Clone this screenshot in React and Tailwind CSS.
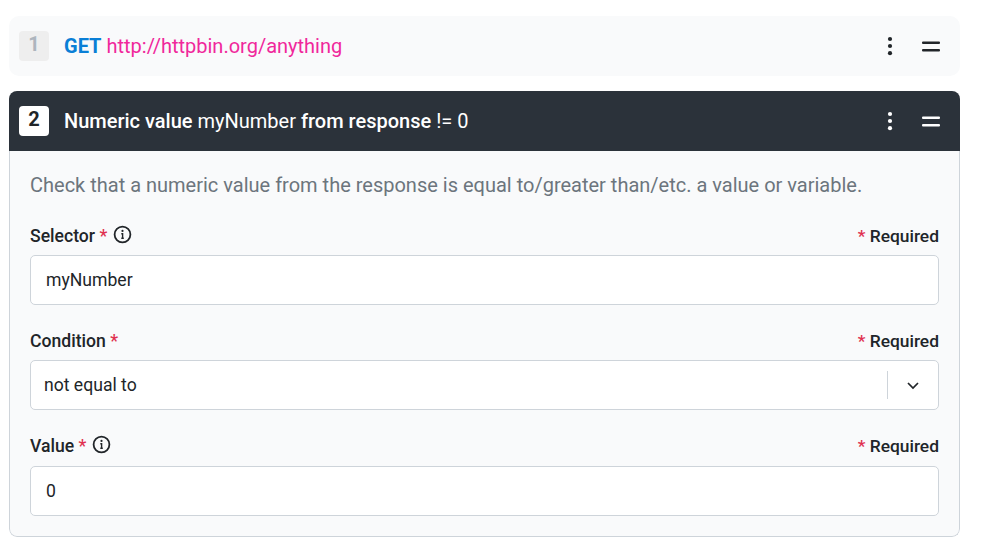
const font = { fontFamily: "Roboto, sans-serif" };

function Kebab({ color }) {
  return (
    <svg width="6" height="20" viewBox="0 0 6 20" className={color}>
      <circle cx="3" cy="3" r="2.1" fill="currentColor" />
      <circle cx="3" cy="10" r="2.1" fill="currentColor" />
      <circle cx="3" cy="17.2" r="2.1" fill="currentColor" />
    </svg>
  );
}

function Grip({ color }) {
  return (
    <svg width="18" height="11" viewBox="0 0 18 11" className={color}>
      <rect x="0" y="0.5" width="18" height="2.4" rx="1" fill="currentColor" />
      <rect x="0" y="8" width="18" height="2.4" rx="1" fill="currentColor" />
    </svg>
  );
}

function Info() {
  return (
    <svg width="19" height="19" viewBox="0 0 19 19" fill="none" className="text-[#212529] -mt-[4px]">
      <circle cx="9.5" cy="9.5" r="7.9" stroke="currentColor" strokeWidth="1.8" />
      <circle cx="9.5" cy="5.9" r="1.1" fill="currentColor" />
      <path d="M8.3 8.8h1.3v4.4M8.3 13.3h2.5" stroke="currentColor" strokeWidth="1.4" />
    </svg>
  );
}

function Label({ name, info }) {
  return (
    <div className="flex items-center justify-between h-[24px]">
      <div className="flex items-center gap-[6px] text-[17.6px] font-medium text-[#212529] leading-[24px]">
        <span>
          {name} <span className="text-[#e03150]">*</span>
        </span>
        {info && <Info />}
      </div>
      <div className="text-[17.4px] font-medium text-[#212529] leading-[24px]">
        <span className="text-[#e03150]">*</span> Required
      </div>
    </div>
  );
}

function TextBox({ value, gap }) {
  return (
    <div className={`${gap} h-[50px] rounded-[5px] border border-[#ced4da] bg-white pl-[15px] flex items-center text-[17.6px] text-[#212529]`}>
      <span className="mt-[1px]">{value}</span>
    </div>
  );
}

export default function App() {
  return (
    <div style={font} className="min-h-[547px] w-[981px] bg-white pl-[9px] pt-[16px]">
      <div className="w-[951px] h-[60px] rounded-[10px] bg-[#f9fafb] flex items-center pl-[10px] pr-[20px]">
        <div className="w-[30px] h-[30px] rounded-[4px] bg-[#eeeeee] flex items-center justify-center text-[20px] font-bold text-[#adb5bd] pb-[4px]">
          1
        </div>
        <div className="ml-[15px] text-[20px] flex-1">
          <span className="font-bold text-[#0a7fd6]">GET</span>{" "}
          <span className="text-[#f0289b]">http://httpbin.org/anything</span>
        </div>
        <Kebab color="text-[#212529]" />
        <div className="w-[29px]" />
        <Grip color="text-[#212529]" />
      </div>

      <div className="mt-[15px] w-[951px] h-[446px] rounded-[8px] overflow-hidden">
        <div className="h-[60px] bg-[#2b323a] flex items-center pl-[10px] pr-[20px]">
          <div className="w-[30px] h-[30px] rounded-[4px] bg-white flex items-center justify-center text-[20px] font-bold text-[#212529] pb-[4px]">
            2
          </div>
          <div className="ml-[15px] text-[20px] text-white flex-1 font-medium">
            Numeric value <span className="font-normal">myNumber</span> from response{" "}
            <span className="font-normal">!= 0</span>
          </div>
          <Kebab color="text-white" />
          <div className="w-[29px]" />
          <Grip color="text-white" />
        </div>
        <div className="h-[386px] border-x border-b border-[#ced4da] rounded-b-[8px] bg-[#f9fafb] px-[20px] pt-[20px]">
          <p className="text-[20px] leading-[28px] text-[#6c757d]">
            Check that a numeric value from the response is equal to/greater than/etc. a value or variable.
          </p>
          <div className="mt-[25px]">
            <Label name="Selector" info />
            <TextBox value="myNumber" gap="mt-[7px]" />
          </div>
          <div className="mt-[24px]">
            <Label name="Condition" />
            <div className="mt-[7px] h-[50px] rounded-[5px] border border-[#ced4da] bg-white pl-[13px] flex items-center text-[17.6px] text-[#212529]">
              <span className="flex-1">not equal to</span>
              <div className="w-px h-[28px] bg-[#ced4da]" />
              <div className="w-[50px] flex items-center justify-center">
                <svg width="14" height="9" viewBox="0 0 14 9" fill="none" stroke="#212529" strokeWidth="1.7">
                  <path d="M2 2l5 5 5-5" />
                </svg>
              </div>
            </div>
          </div>
          <div className="mt-[24px]">
            <Label name="Value" info />
            <TextBox value="0" gap="mt-[8px]" />
          </div>
        </div>
      </div>
    </div>
  );
}
